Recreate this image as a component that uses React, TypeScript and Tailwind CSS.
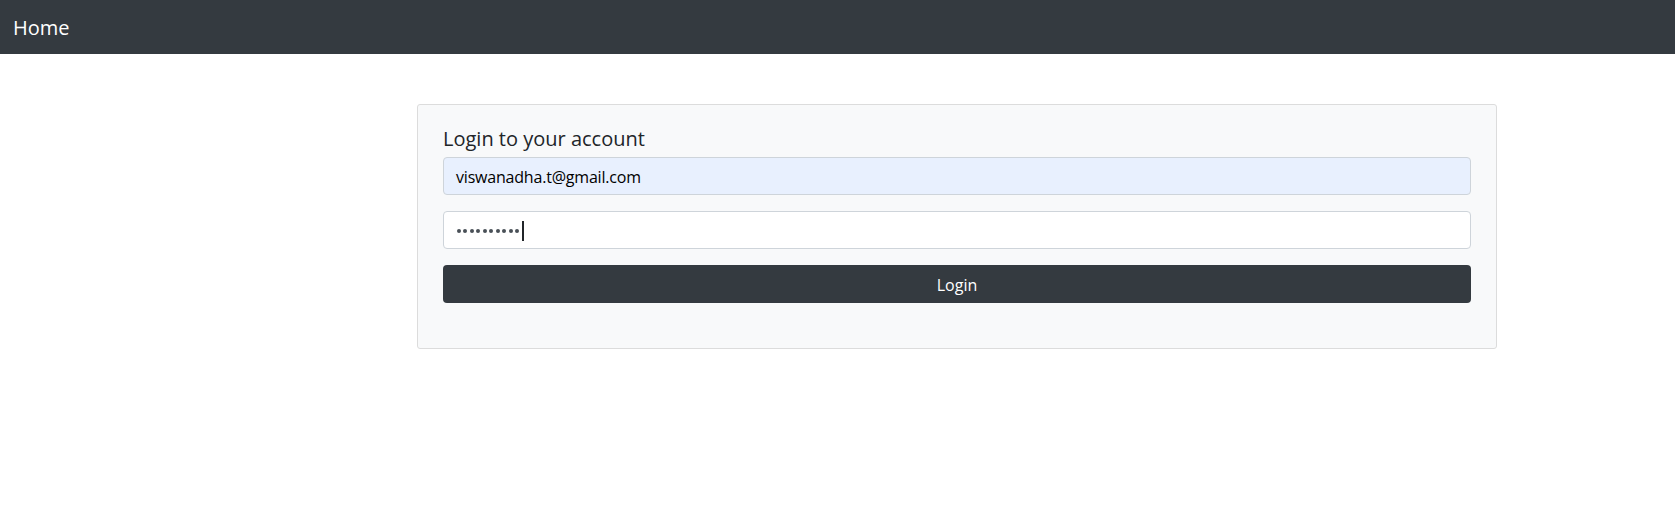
const font = { fontFamily: '"Segoe UI", "Open Sans", "Noto Sans", sans-serif' };

function PasswordDots({ count }: { count: number }) {
  return (
    <div className="flex items-center gap-[2.45px] pt-[2px]">
      {Array.from({ length: count }).map((_, i) => (
        <span key={i} className="block h-1 w-1 rounded-full bg-[#495057]" />
      ))}
      <span className="ml-[1px] block h-[20px] w-[2px] bg-[#212529]" />
    </div>
  );
}

export default function App() {
  return (
    <div className="min-h-[523px] bg-white text-[#212529]" style={font}>
      <nav className="flex h-[54px] items-center bg-[#343a40] px-[13px]">
        <a href="#" className="pt-[2px] text-[20px] leading-[30px] text-white">
          Home
        </a>
      </nav>

      <main className="pt-[50px]">
        <div className="ml-[417px] w-[1080px] rounded-[3px] border border-[#dcdcdc] bg-[#f8f9fa] px-[25px] pt-[22px] pb-[45px]">
          <h5 className="mb-[6px] text-[20px] leading-[24px] font-medium text-[#212529]">
            Login to your account
          </h5>

          <div className="mb-4 flex h-[38px] items-center rounded-[4px] border border-[#ced4da] bg-[#e8f0fe] px-[12px] pt-[2px] text-[16px] tracking-[-0.2px] text-black">
            viswanadha.t@gmail.com
          </div>

          <div className="mb-4 flex h-[38px] items-center rounded-[4px] border border-[#ced4da] bg-white px-[13px]">
            <PasswordDots count={10} />
          </div>

          <button
            type="button"
            className="flex h-[38px] w-full items-center justify-center rounded-[4px] bg-[#343a40] pt-[2px] text-[16px] text-white"
          >
            Login
          </button>
        </div>
      </main>
    </div>
  );
}
